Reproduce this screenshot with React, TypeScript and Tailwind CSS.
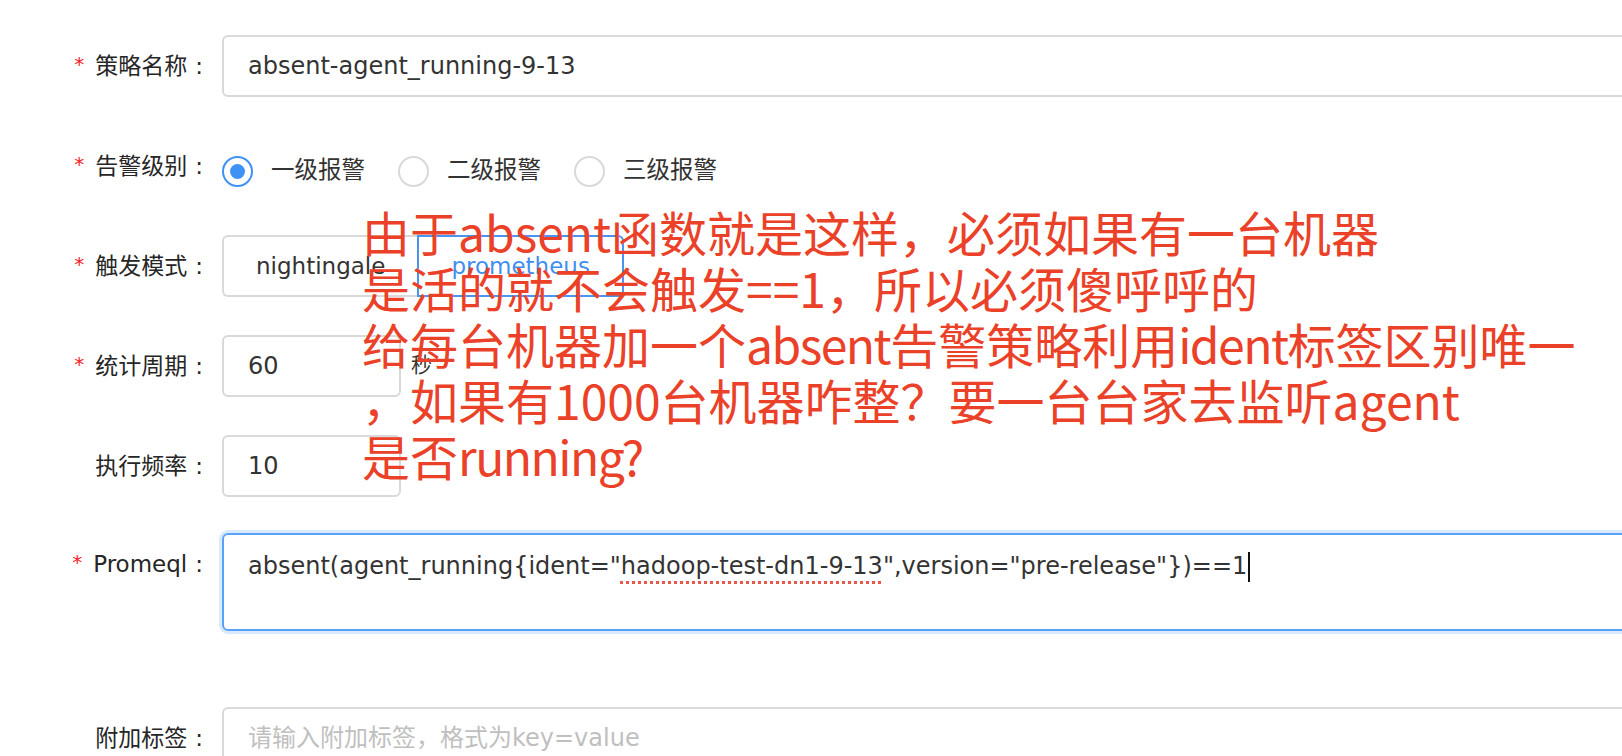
import React from 'react'

const UI_FONT = 'font-["DejaVu_Sans","Noto_Sans_CJK_SC",sans-serif]'

function Label({ text, required }: { text: string; required?: boolean }) {
  return (
    <div className="w-[203px] h-[62px] shrink-0 flex items-center justify-end text-[23px] text-[#262626] whitespace-nowrap">
      {required && <span className="text-[#f5222d] text-[20px] mr-[11px] -mt-[4px]">*</span>}
      <span>{text}</span>
      <span className="ml-[8px]">:</span>
    </div>
  )
}

function Radio({ label, checked }: { label: string; checked?: boolean }) {
  return (
    <div className="flex items-center mr-[33px]">
      <span
        className={`w-[31px] h-[31px] shrink-0 rounded-full flex items-center justify-center bg-white ${
          checked ? 'border-2 border-[#3f92f5]' : 'border-2 border-[#d9d9d9]'
        }`}
      >
        {checked && <span className="w-[15px] h-[15px] rounded-full bg-[#3f92f5]" />}
      </span>
      <span className="ml-[18px] text-[23.5px] text-[#333]">{label}</span>
    </div>
  )
}

// latin words in the red note are set a bit tighter than the CJK font gives
const Lt = ({ children }: { children: React.ReactNode }) => (
  <span className="tracking-[-1.5px]">{children}</span>
)

export default function App() {
  return (
    <div className={`relative w-[1622px] h-[756px] overflow-hidden bg-white ${UI_FONT}`}>
      <div className="flex flex-col pt-[35px]">
        {/* 策略名称 */}
        <div className="flex mb-[38px]">
          <Label text="策略名称" required />
          <div className="ml-[19px] w-[1500px] shrink-0 h-[62px] border-2 border-[#d9d9d9] rounded-[6px] px-[24px] flex items-center text-[24px] text-[#333]">
            absent-agent_running-9-13
          </div>
        </div>

        {/* 告警级别 */}
        <div className="flex mb-[38px]">
          <Label text="告警级别" required />
          <div className="ml-[19px] h-[62px] flex items-center pt-[10px]">
            <Radio label="一级报警" checked />
            <Radio label="二级报警" />
            <Radio label="三级报警" />
          </div>
        </div>

        {/* 触发模式 */}
        <div className="flex mb-[38px]">
          <Label text="触发模式" required />
          <div className="ml-[19px] h-[62px] flex text-[23px]">
            <div className="h-full px-[32px] flex items-center border-2 border-r-0 border-[#d9d9d9] rounded-l-[6px] text-[#333]">
              nightingale
            </div>
            <div className="h-full px-[32px] flex items-center border-2 border-[#4a94f0] rounded-r-[6px] text-[#3f8ff0]">
              prometheus
            </div>
          </div>
        </div>

        {/* 统计周期 */}
        <div className="flex mb-[38px]">
          <Label text="统计周期" required />
          <div className="ml-[19px] w-[179px] shrink-0 h-[62px] border-2 border-[#d9d9d9] rounded-[6px] px-[24px] flex items-center text-[24px] text-[#333]">
            60
          </div>
          <div className="ml-[10px] h-[62px] flex items-center text-[21px] text-[#333]">秒</div>
        </div>

        {/* 执行频率 */}
        <div className="flex mb-[36px]">
          <Label text="执行频率" />
          <div className="ml-[19px] w-[179px] shrink-0 h-[62px] border-2 border-[#d9d9d9] rounded-[6px] px-[24px] flex items-center text-[24px] text-[#333]">
            10
          </div>
        </div>

        {/* Promeql */}
        <div className="flex mb-[76px]">
          <Label text="Promeql" required />
          <div className="ml-[19px] w-[1500px] shrink-0 h-[98px] border-2 border-[#5aa2f7] rounded-[6px] shadow-[0_0_0_3px_rgba(64,150,250,0.2)] px-[24px] pt-[13px] text-[24px] leading-[36px] text-[#333] whitespace-nowrap">
            absent(agent_running{'{'}ident="
            <span className="underline decoration-dotted decoration-[#e5584a] decoration-[3px] underline-offset-[7px]">
              hadoop-test-dn1-9-13
            </span>
            ",version="pre-release"{'}'})==1
            <span className="inline-block w-[2px] h-[30px] bg-[#111] align-middle ml-[1px]" />
          </div>
        </div>

        {/* 附加标签 */}
        <div className="flex">
          <Label text="附加标签" />
          <div className="ml-[19px] w-[1500px] shrink-0 h-[62px] border-2 border-[#d9d9d9] rounded-[6px] px-[24px] flex items-center text-[24px] text-[#bfbfbf]">
            请输入附加标签，格式为key=value
          </div>
        </div>
      </div>

      {/* red annotation written over the screenshot */}
      <div className='absolute left-[362px] top-[203px] font-["Noto_Sans_CJK_SC",sans-serif] text-[48px] leading-[56px] text-[#ea4128] whitespace-nowrap'>
        <div>由于absent函数就是这样，必须如果有一台机器</div>
        <div>是活的就不会触发==1，所以必须傻呼呼的</div>
        <div>给每台机器加一个<Lt>absent</Lt>告警策略利用<Lt>ident</Lt>标签区别唯一</div>
        <div>，如果有1000台机器咋整？要一台台家去监听agent</div>
        <div>是否<Lt>running?</Lt></div>
      </div>
    </div>
  )
}
